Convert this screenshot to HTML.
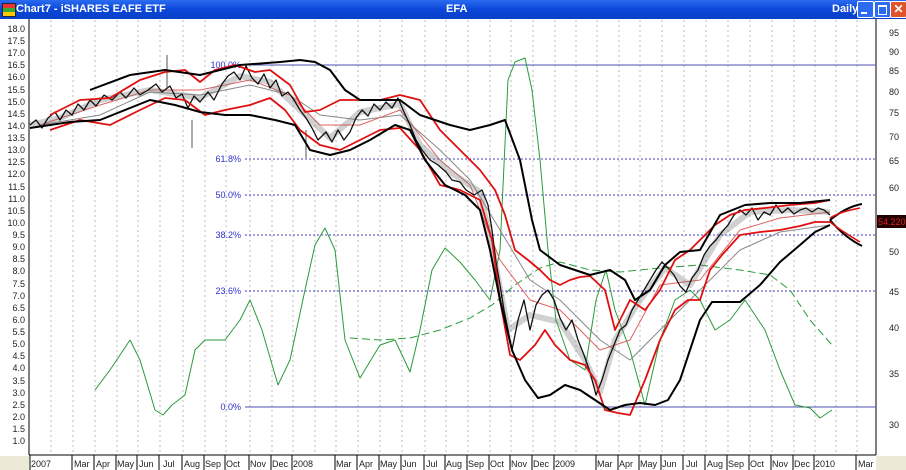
<!DOCTYPE html>
<html><head><meta charset="utf-8"><style>
body{margin:0;width:906px;height:470px;overflow:hidden;background:#fff;font-family:"Liberation Sans",sans-serif}
#tb{position:absolute;left:0;top:0;width:906px;height:19px;background:linear-gradient(#2a6cf0,#0a46d8 50%,#0840c8);color:#fff;font-size:11px;font-weight:bold}
svg{position:absolute;left:0;top:0}
path{stroke-linejoin:round}
</style></head><body>
<div id="tb">
<div style="position:absolute;left:2px;top:3px;width:12px;height:12px;background:linear-gradient(#e33 0 33%,#3a3 33% 66%,#fc0 66%);border:1px solid #224"></div>
<span style="position:absolute;left:16px;top:3px">Chart7 - iSHARES EAFE ETF</span>
<span style="position:absolute;left:446px;top:3px">EFA</span>
<span style="position:absolute;left:832px;top:3px">Daily</span>
<div style="position:absolute;left:857px;top:1px;width:15px;height:15px;background:#2d6cf2;border:1px solid #fff;border-radius:2px"><div style="position:absolute;left:3px;top:10px;width:6px;height:2px;background:#fff"></div></div>
<div style="position:absolute;left:874px;top:1px;width:15px;height:15px;background:#2d6cf2;border:1px solid #fff;border-radius:2px"><div style="position:absolute;left:3px;top:3px;width:7px;height:7px;border:1px solid #fff;border-top-width:2px"></div></div>
<div style="position:absolute;left:890px;top:1px;width:15px;height:15px;background:#e0542c;border:1px solid #fff;border-radius:2px;text-align:center;line-height:15px;font-size:12px">✕</div>
</div>
<svg width="906" height="470" viewBox="0 0 906 470" font-family="Liberation Sans" font-size="9">
<rect x="876" y="19" width="30" height="451" fill="#fff"/>
<line x1="29" y1="19" x2="29" y2="455" stroke="#000"/>
<line x1="876" y1="19" x2="876" y2="455" stroke="#000"/>
<g stroke="#bbb" stroke-dasharray="2,3">
<path d="M51 20V455M73 20V455M95 20V455M117 20V455M138 20V455M160 20V455M183 20V455M205 20V455M226 20V455M250 20V455M272 20V455M293 20V455M315 20V455M336 20V455M358 20V455M380 20V455M402 20V455M425 20V455M446 20V455M468 20V455M490 20V455M511 20V455M533 20V455M555 20V455M576 20V455M597 20V455M619 20V455M640 20V455M662 20V455M684 20V455M706 20V455M728 20V455M750 20V455M772 20V455M794 20V455M815 20V455M836 20V455M857 20V455"/>
</g>
<g stroke="#4040c0" stroke-dasharray="2,2">
<path d="M245 159H876M245 195H876M245 235H876M245 291H876"/>
</g>
<path d="M245 65H876M245 407H876" stroke="#5050b0"/>
<g fill="#3030d0" text-anchor="end">
<text x="241" y="68">100.0%</text><text x="241" y="162">61.8%</text><text x="241" y="198">50.0%</text><text x="241" y="238">38.2%</text><text x="241" y="294">23.6%</text><text x="241" y="410">0.0%</text>
</g>
<g fill="#222" text-anchor="end">
<text x="25" y="32">18.0</text><text x="25" y="44">17.5</text><text x="25" y="56">17.0</text><text x="25" y="68">16.5</text><text x="25" y="80">16.0</text><text x="25" y="93">15.5</text><text x="25" y="105">15.0</text><text x="25" y="117">14.5</text><text x="25" y="129">14.0</text><text x="25" y="141">13.5</text><text x="25" y="153">13.0</text><text x="25" y="165">12.5</text><text x="25" y="177">12.0</text><text x="25" y="190">11.5</text><text x="25" y="202">11.0</text><text x="25" y="214">10.5</text><text x="25" y="226">10.0</text><text x="25" y="238">9.5</text><text x="25" y="250">9.0</text><text x="25" y="262">8.5</text><text x="25" y="274">8.0</text><text x="25" y="287">7.5</text><text x="25" y="299">7.0</text><text x="25" y="311">6.5</text><text x="25" y="323">6.0</text><text x="25" y="335">5.5</text><text x="25" y="347">5.0</text><text x="25" y="359">4.5</text><text x="25" y="371">4.0</text><text x="25" y="384">3.5</text><text x="25" y="396">3.0</text><text x="25" y="408">2.5</text><text x="25" y="420">2.0</text><text x="25" y="432">1.5</text><text x="25" y="444">1.0</text>
</g>
<g fill="#222"><text x="889" y="36">95</text><text x="889" y="55">90</text><text x="889" y="74">85</text><text x="889" y="95">80</text><text x="889" y="116">75</text><text x="889" y="140">70</text><text x="889" y="164">65</text><text x="889" y="191">60</text><text x="889" y="255">50</text><text x="889" y="295">45</text><text x="889" y="331">40</text><text x="889" y="377">35</text><text x="889" y="428">30</text></g>
<!-- green oscillator -->
<path d="M95 390L110 370L130 340L140 360L155 410L163 415L172 405L185 395L195 350L205 340L225 340L240 320L250 300L262 330L278 385L290 360L305 290L315 245L325 228L335 250L345 340L360 378L380 345L395 340L410 372L420 330L432 270L445 248L460 262L475 280L490 300L500 250L508 80L515 62L525 58L532 90L540 160L548 250L556 320L570 360L585 370L596 300L606 270L615 310L630 350L645 405L660 340L675 300L690 290L700 300L715 330L730 320L745 300L755 315L765 330L780 370L795 405L810 408L820 418L832 410" fill="none" stroke="#2a9a3a"/>
<path d="M350 338L380 340L410 338L440 330L470 318L492 305L515 285L540 268L560 262L590 270L620 272L660 268L700 265L740 270L770 275L790 290L810 320L832 345" fill="none" stroke="#2a9a3a" stroke-dasharray="8,4"/>
<!-- thin MAs -->
<path d="M40 125L100 115L150 92L200 95L250 85L290 95L320 115L360 120L400 115L440 150L470 180L500 230L530 280L560 300L600 340L630 360L660 330L700 290L740 250L780 232L830 225" fill="none" stroke="#888" stroke-width="1"/>
<path d="M40 125L100 105L150 90L200 90L250 80L290 95L320 125L360 125L400 110L440 160L470 185L500 260L530 300L560 310L600 350L630 340L660 285L700 280L740 230L780 218L830 212" fill="none" stroke="#e06060" stroke-width="1"/>
<!-- price density band -->
<path d="M30 125L60 118L100 100L150 90L200 98L240 76L270 82L300 110L330 138L360 112L400 104L420 145L450 172L480 192L495 262L508 330L530 315L560 322L585 360L600 392L615 340L640 300L665 268L690 285L720 235L750 212L790 210L830 212" fill="none" stroke="#777" stroke-width="6" stroke-opacity="0.35"/>
<!-- price -->
<path d="M30 125L36 120L42 128L48 118L55 112L60 120L66 110L72 115L78 104L84 110L90 100L96 106L104 95L112 100L120 92L126 98L134 88L140 95L148 90L156 84L162 92L170 86L176 98L182 94L188 108L194 96L200 102L208 92L214 100L222 84L228 76L234 72L240 80L246 66L252 78L258 84L264 74L270 88L276 80L282 96L288 92L294 100L300 110L306 118L312 128L318 140L326 132L332 142L338 130L344 140L350 132L356 118L362 110L368 116L374 104L380 110L386 102L392 108L398 98L404 112L410 125L416 140L422 150L430 160L438 165L446 172L452 180L460 182L466 190L474 195L482 190L488 205L492 230L496 262L500 285L504 310L508 330L512 350L518 320L524 300L530 330L536 305L542 295L548 290L554 300L560 318L566 330L572 320L578 340L584 355L590 372L596 395L602 380L608 360L614 345L620 330L626 325L632 310L638 300L644 290L650 280L656 270L662 262L668 268L674 275L680 286L686 292L692 278L698 270L704 255L710 246L716 240L722 232L728 225L734 215L740 210L746 215L752 208L758 220L764 212L770 215L776 205L782 213L788 208L794 214L800 210L806 208L812 212L818 208L824 210L830 215" fill="none" stroke="#111" stroke-width="1.3"/>
<path d="M167 55V88M192 120V148M306 130V158" stroke="#555"/>
<!-- red bands -->
<path d="M50 115L80 100L110 98L140 80L165 72L185 70L200 82L215 70L235 65L255 72L270 70L290 85L305 112L320 110L340 100L360 100L380 100L400 95L420 100L440 130L460 150L480 170L495 190L505 215L515 250L528 260L540 270L550 280L560 285L570 280L580 277L590 276L605 290L615 330L630 300L645 310L660 290L675 260L690 250L700 240L715 225L730 215L745 210L765 208L790 205L815 203L830 200" fill="none" stroke="#e01010" stroke-width="1.8"/>
<path d="M50 130L80 120L110 125L140 110L165 98L185 100L205 115L225 110L250 105L270 98L285 110L300 130L320 145L340 150L360 140L380 130L400 128L420 150L440 185L460 190L480 200L492 240L500 300L510 355L520 360L535 345L545 330L555 345L570 360L585 365L595 380L605 410L618 413L630 415L645 380L660 340L675 310L688 300L700 300L710 270L722 255L740 235L760 232L780 230L800 226L815 222L830 222" fill="none" stroke="#e01010" stroke-width="1.8"/>
<!-- black bands -->
<path d="M90 90L130 75L165 70L200 75L240 65L280 62L300 60L315 62L330 70L345 90L360 100L380 100L400 100L420 115L450 125L470 130L490 125L505 120L520 160L532 220L540 250L560 265L590 275L610 270L625 280L635 300L650 290L665 265L680 252L700 250L720 215L745 205L770 203L800 203L830 200" fill="none" stroke="#000" stroke-width="2"/>
<path d="M30 128L70 122L100 120L130 108L150 100L175 105L200 112L225 115L250 115L275 120L295 125L310 150L330 155L350 150L370 140L395 125L410 130L425 160L445 185L465 195L480 210L490 250L500 300L512 350L525 380L538 398L550 395L565 385L580 390L595 400L610 410L625 405L640 403L655 405L668 400L680 380L690 350L700 320L712 302L740 302L760 285L780 262L800 245L815 232L830 225" fill="none" stroke="#000" stroke-width="2"/>
<!-- projection -->
<path d="M830 220C840 212 850 206 862 204M830 220C840 232 850 240 862 246" fill="none" stroke="#000" stroke-width="2"/>
<path d="M830 218C840 212 850 210 860 208M830 222C840 230 850 236 860 242" fill="none" stroke="#e01010" stroke-width="1.5"/>
<rect x="877" y="215" width="29" height="13" fill="#200"/>
<text x="878" y="225" fill="#e02020" font-size="9">54.220</text>
<!-- bottom axis -->
<rect x="0" y="455" width="906" height="15" fill="#fff"/>
<rect x="0" y="456" width="29" height="14" fill="#ece9d8"/>
<rect x="876" y="456" width="30" height="14" fill="#ece9d8"/>
<line x1="29" y1="455" x2="876" y2="455" stroke="#000"/>
<g stroke="#000"><path d="M30 455V470M72 455V470M94 455V470M116 455V470M137 455V470M159 455V470M182 455V470M204 455V470M225 455V470M249 455V470M271 455V470M292 455V470M335 455V470M357 455V470M379 455V470M401 455V470M424 455V470M445 455V470M467 455V470M489 455V470M510 455V470M532 455V470M554 455V470M596 455V470M618 455V470M639 455V470M661 455V470M683 455V470M705 455V470M727 455V470M749 455V470M771 455V470M793 455V470M814 455V470M856 455V470"/></g>
<g fill="#222" font-size="9"><text x="31" y="467">2007</text><text x="74" y="467">Mar</text><text x="96" y="467">Apr</text><text x="117" y="467">May</text><text x="139" y="467">Jun</text><text x="163" y="467">Jul</text><text x="184" y="467">Aug</text><text x="205" y="467">Sep</text><text x="226" y="467">Oct</text><text x="250" y="467">Nov</text><text x="272" y="467">Dec</text><text x="293" y="467">2008</text><text x="336" y="467">Mar</text><text x="359" y="467">Apr</text><text x="380" y="467">May</text><text x="402" y="467">Jun</text><text x="426" y="467">Jul</text><text x="446" y="467">Aug</text><text x="468" y="467">Sep</text><text x="490" y="467">Oct</text><text x="511" y="467">Nov</text><text x="533" y="467">Dec</text><text x="555" y="467">2009</text><text x="597" y="467">Mar</text><text x="619" y="467">Apr</text><text x="640" y="467">May</text><text x="662" y="467">Jun</text><text x="686" y="467">Jul</text><text x="707" y="467">Aug</text><text x="728" y="467">Sep</text><text x="750" y="467">Oct</text><text x="772" y="467">Nov</text><text x="794" y="467">Dec</text><text x="815" y="467">2010</text><text x="858" y="467">Mar</text></g>
</svg>
</body></html>
